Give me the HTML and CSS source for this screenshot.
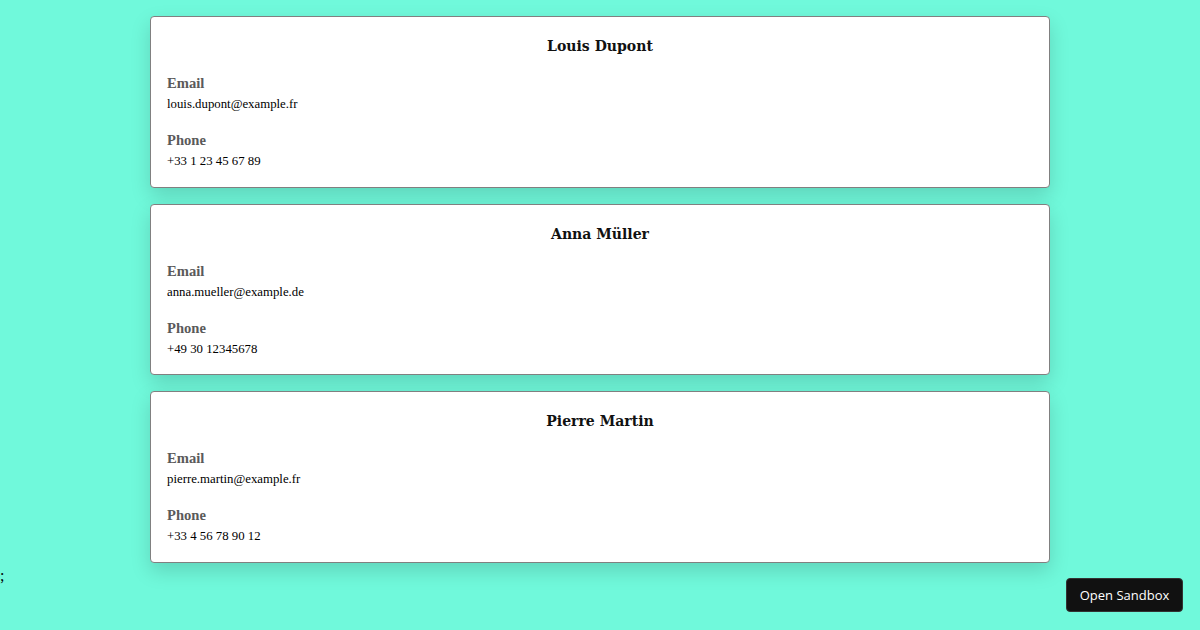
FILE: index.html
```html
<!DOCTYPE html>
<html>
<head>
<meta charset="utf-8">
<link rel="stylesheet" href="styles.css">
</head>
<body>
<div class="list">
  <div class="card">
    <h2 class="name">Louis Dupont</h2>
    <div class="field">
      <div class="label">Email</div>
      <div class="value">louis.dupont@example.fr</div>
    </div>
    <div class="field">
      <div class="label">Phone</div>
      <div class="value">+33 1 23 45 67 89</div>
    </div>
  </div>
  <div class="card">
    <h2 class="name">Anna Müller</h2>
    <div class="field">
      <div class="label">Email</div>
      <div class="value">anna.mueller@example.de</div>
    </div>
    <div class="field">
      <div class="label">Phone</div>
      <div class="value">+49 30 12345678</div>
    </div>
  </div>
  <div class="card">
    <h2 class="name">Pierre Martin</h2>
    <div class="field">
      <div class="label">Email</div>
      <div class="value">pierre.martin@example.fr</div>
    </div>
    <div class="field">
      <div class="label">Phone</div>
      <div class="value">+33 4 56 78 90 12</div>
    </div>
  </div>
</div>
<div class="stray">;</div>
<button class="sandbox">Open Sandbox</button>
</body>
</html>
```
FILE: styles.css
```css
html, body {
  margin: 0;
  padding: 0;
}
body {
  background: #70f9db;
  font-family: "Liberation Serif", serif;
  color: #000;
  height: 630px;
}
.list {
  width: 900px;
  margin: 0 auto;
  padding-top: 16px;
  padding-bottom: 3px;
  display: flex;
  flex-direction: column;
  gap: 16px;
}
.card {
  background: #fff;
  border: 1px solid #808080;
  border-radius: 4px;
  box-shadow: 0 8px 20px rgba(0, 0, 0, 0.15);
  padding: 18px 16px 18px 16px;
  height: 171.5px;
  box-sizing: border-box;
}
.name {
  margin: 0 0 16px 0;
  text-align: center;
  font-family: "DejaVu Serif", "Liberation Serif", serif;
  font-stretch: condensed;
  font-size: 15.6px;
  line-height: 22px;
  font-weight: bold;
  color: #111;
}
.field {
  margin-bottom: 16px;
}
.field:last-child {
  margin-bottom: 0;
}
.label {
  font-size: 14.6px;
  line-height: 20px;
  font-weight: bold;
  color: #5a5a5a;
  margin-bottom: 1px;
}
.value {
  font-size: 12.8px;
  line-height: 20px;
  color: #000;
}
.stray {
  font-size: 16px;
  line-height: 20px;
}
.sandbox {
  position: fixed;
  right: 17px;
  bottom: 18px;
  width: 117px;
  height: 34px;
  background: #111;
  color: #fff;
  border: 1px solid #333;
  border-radius: 4px;
  font-family: "Open Sans", sans-serif;
  font-size: 13px;
  padding: 0;
  cursor: pointer;
}
```
